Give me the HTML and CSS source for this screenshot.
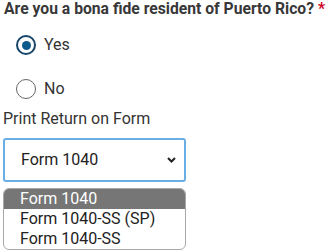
FILE: index.html
```html
<!DOCTYPE html>
<html>
<head>
<meta charset="utf-8">
<link rel="stylesheet" href="styles.css">
</head>
<body>
<div class="page">
  <div class="question">Are you a bona fide resident of Puerto Rico? <span class="req">*</span></div>
  <div class="radios">
    <div class="radio-row">
      <span class="radio checked"><span class="dot"></span></span>
      <span class="radio-label">Yes</span>
    </div>
    <div class="radio-row">
      <span class="radio"></span>
      <span class="radio-label">No</span>
    </div>
  </div>
  <div class="field-label">Print Return on Form</div>
  <div class="select">
    <span class="select-value">Form 1040</span>
    <svg class="chevron" width="9" height="6" viewBox="0 0 9 6"><path d="M1 1 L4.5 4.5 L8 1" fill="none" stroke="#222" stroke-width="2"/></svg>
  </div>
  <div class="listbox">
    <div class="option selected">Form 1040</div>
    <div class="option">Form 1040-SS (SP)</div>
    <div class="option">Form 1040-SS</div>
  </div>
</div>
</body>
</html>
```
FILE: styles.css
```css
html, body {
  margin: 0;
  padding: 0;
  background: #fff;
}
.page {
  padding-left: 3px;
  font-family: Roboto, "Liberation Sans", sans-serif;
  color: #333;
  font-size: 16px;
}
.question {
  font-weight: bold;
  font-size: 15.7px;
  line-height: 18px;
  height: 18px;
  margin-bottom: 5px;
  padding-left: 1px;
  white-space: nowrap;
  color: #383838;
}
.req {
  color: #d0021b;
}
.radios {
  display: flex;
  flex-direction: column;
}
.radio-row {
  height: 44px;
  display: flex;
  align-items: center;
  padding-left: 13px;
  gap: 8px;
}
.radio {
  box-sizing: border-box;
  width: 20px;
  height: 20px;
  border-radius: 50%;
  border: 1.5px solid #666;
  display: flex;
  align-items: center;
  justify-content: center;
}
.radio.checked {
  border: 2px solid #17456a;
}
.dot {
  width: 9px;
  height: 9px;
  border-radius: 50%;
  background: #0d5a8c;
}
.radio-label {
  line-height: 20px;
  color: #333;
}
.field-label {
  line-height: 16px;
  height: 16px;
  margin-bottom: 11px;
}
.select {
  box-sizing: border-box;
  width: 183px;
  height: 44px;
  border: 2px solid #6aaee6;
  border-radius: 3px;
  display: flex;
  align-items: center;
  justify-content: space-between;
  padding: 0 8px 0 16px;
}
.select-value {
  line-height: 40px;
  color: #222;
}
.chevron {
  display: block;
}
.listbox {
  box-sizing: border-box;
  margin-top: 6px;
  width: 183px;
  border: 1px solid #a8a8a8;
  border-radius: 6px;
  overflow: hidden;
}
.option {
  line-height: 20px;
  height: 20px;
  padding-left: 16px;
  color: #222;
}
.option.selected {
  background: #767676;
  color: #fff;
}
```
